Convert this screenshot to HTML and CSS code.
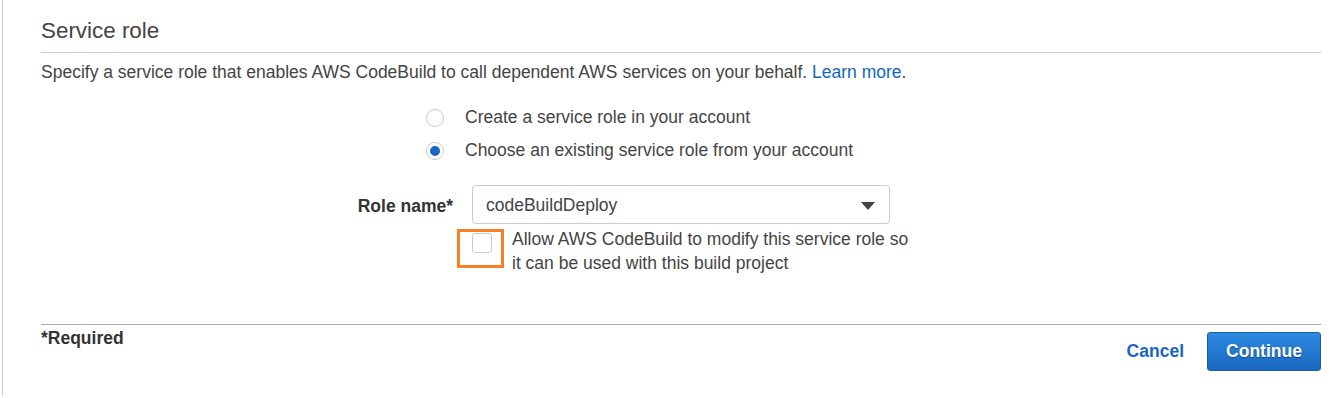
FILE: index.html
```html
<!DOCTYPE html>
<html lang="en">
<head>
  <title>Service role</title>
  <meta name="viewport" content="width=device-width, initial-scale=1">
  <meta charset="UTF-8">
  <link rel="stylesheet" href="styles.css">
</head>
<body>
  <div class="page">
    <h2 class="section-title">Service role</h2>
    <p class="section-desc">
      Specify a service role that enables AWS CodeBuild to call dependent AWS services on your behalf.
      <a href="#" class="link">Learn more</a>.
    </p>

    <div class="radio-group">
      <label class="radio-row">
        <span class="radio"></span>
        Create a service role in your account
      </label>
      <label class="radio-row">
        <span class="radio checked"></span>
        Choose an existing service role from your account
      </label>
    </div>

    <div class="form-grid">
      <div class="field-label">Role name*</div>
      <div class="select">
        <span>codeBuildDeploy</span>
        <span class="caret"></span>
      </div>

      <div class="check-row">
        <span class="checkbox-wrap">
          <span class="checkbox"></span>
          <span class="highlight"></span>
        </span>
        <span class="check-text">Allow AWS CodeBuild to modify this service role so it can be used with this build project</span>
      </div>
    </div>

    <div class="footer">
      <div class="required">*Required</div>
      <div class="actions">
        <a href="#" class="cancel">Cancel</a>
        <button class="btn-primary">Continue</button>
      </div>
    </div>
  </div>
</body>
</html>
```

FILE: styles.css
```css
body {
  font-family: "Liberation Sans", Arial, sans-serif;
  margin: 0;
  padding: 0 0 0 2px;
  background: #fff;
  color: #444;
}
.page {
  border-left: 1px solid #ccc;
  padding: 0 23px 2px 38px;
  height: 396px;
  box-sizing: border-box;
}
.section-title {
  margin: 0;
  padding: 16px 0 6px;
  font-size: 22.4px;
  font-weight: normal;
  line-height: 30px;
  border-bottom: 1px solid #ccc;
}
.section-desc {
  margin: 9px 0 0;
  font-size: 17.5px;
  line-height: 20px;
}
.link {
  color: #1166bb;
  text-decoration: none;
}
.radio-group {
  margin: 19px 0 0 385px;
}
.radio-row {
  display: flex;
  align-items: center;
  gap: 21px;
  height: 33px;
  font-size: 17.5px;
}
.radio {
  width: 16px;
  height: 16px;
  border: 1px solid #ccc;
  border-radius: 50%;
  box-sizing: content-box;
  position: relative;
}
.radio.checked::after {
  content: "";
  position: absolute;
  left: 3px;
  top: 3px;
  width: 10px;
  height: 10px;
  border-radius: 50%;
  background: #1a66c2;
}
.form-grid {
  display: grid;
  grid-template-columns: 412px 418px;
  column-gap: 19px;
  margin-top: 18px;
  font-size: 17.5px;
}
.field-label {
  font-weight: bold;
  text-align: right;
  align-self: center;
  padding-top: 3px;
  color: #333;
}
.select {
  height: 39px;
  box-sizing: border-box;
  border: 1px solid #ccc;
  border-radius: 4px;
  display: flex;
  align-items: center;
  justify-content: space-between;
  padding: 2px 14px 0 13px;
}
.caret {
  width: 0;
  height: 0;
  border-left: 7px solid transparent;
  border-right: 7px solid transparent;
  border-top: 8px solid #444;
}
.check-row {
  grid-column: 2;
  display: flex;
  gap: 20px;
  margin-top: 3px;
  line-height: 24px;
}
.checkbox-wrap {
  position: relative;
  width: 20px;
  flex: none;
  padding-top: 6px;
}
.checkbox {
  display: block;
  width: 20px;
  height: 20px;
  box-sizing: border-box;
  border: 1px solid #ccc;
  border-radius: 3px;
}
.highlight {
  position: absolute;
  left: -15px;
  top: 2px;
  width: 47px;
  height: 39px;
  box-sizing: border-box;
  border: 3px solid #f58025;
}
.check-text {
  flex: none;
  width: 405px;
}
.footer {
  margin-top: 49px;
  border-top: 1px solid #aaa;
  display: flex;
  justify-content: space-between;
  align-items: flex-start;
}
.required {
  font-weight: bold;
  font-size: 17.5px;
  line-height: 26px;
  color: #333;
}
.actions {
  display: flex;
  align-items: center;
  gap: 23px;
  margin-top: 7px;
}
.cancel {
  color: #1a66c2;
  font-weight: bold;
  font-size: 17.5px;
  text-decoration: none;
}
.btn-primary {
  font-family: inherit;
  font-size: 17.5px;
  font-weight: bold;
  color: #fff;
  width: 114px;
  height: 39px;
  border: 1px solid #1a5ea8;
  border-radius: 3px;
  background: linear-gradient(#2d8ae2, #1968c0);
  text-shadow: 0 1px 1px rgba(0,0,0,0.4);
  cursor: pointer;
}
```
